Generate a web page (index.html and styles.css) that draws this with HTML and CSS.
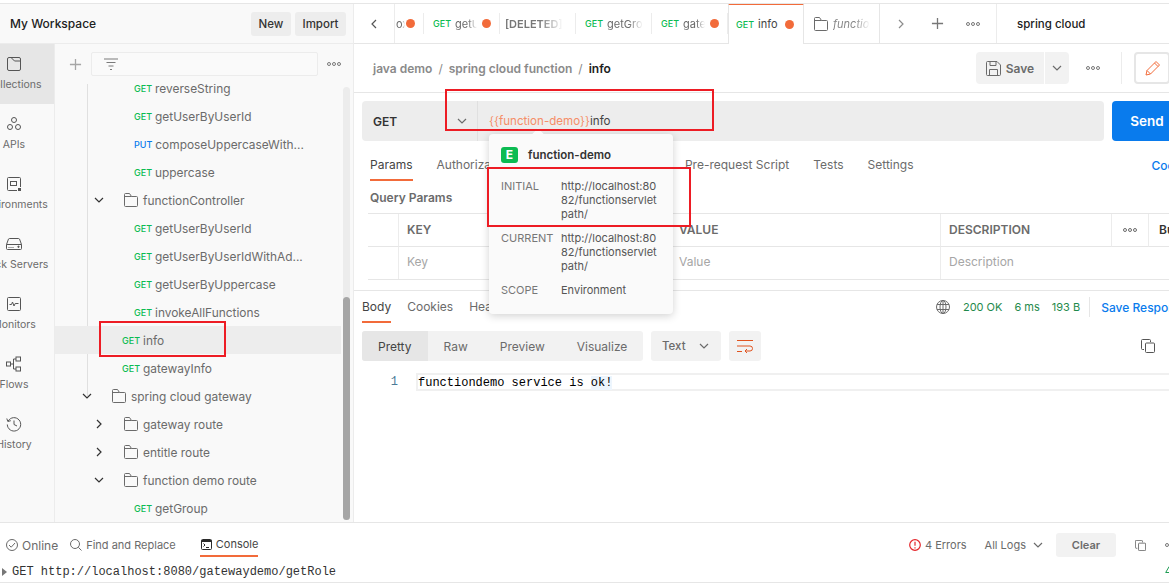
FILE: index.html
```html
<!DOCTYPE html>
<html lang="en">
<head>
<meta charset="UTF-8">
<title>My Workspace</title>
<link rel="stylesheet" href="styles.css">
</head>
<body>
<svg class="defs" width="0" height="0">
  <symbol id="folder" viewBox="0 0 14 14"><path d="M.5 12.500V1.500a1 1 0 0 1 1-1h4l2 3h5a1 1 0 0 1 1 1v8a1 1 0 0 1-1 1h-11a1 1 0 0 1-1-1zM.5 3.500h7" fill="none" stroke="currentColor"/></symbol>
  <symbol id="chev-down" viewBox="0 0 10 10"><path d="M1 3l4 4 4-4" fill="none" stroke="currentColor" stroke-width="1.2"/></symbol>
  <symbol id="chev-right" viewBox="0 0 10 10"><path d="M3 1l4 4-4 4" fill="none" stroke="currentColor" stroke-width="1.2"/></symbol>
  <symbol id="dots" viewBox="0 0 14 4"><g fill="none" stroke="currentColor"><circle cx="2" cy="2" r="1.5"/><circle cx="7" cy="2" r="1.5"/><circle cx="12" cy="2" r="1.5"/></g></symbol>
  <symbol id="plus" viewBox="0 0 14 14"><path d="M7 1v12M1 7h12" fill="none" stroke="currentColor" stroke-width="1.4"/></symbol>
  <symbol id="copy" viewBox="0 0 14 14"><path d="M3 10.5H1.5a1 1 0 0 1-1-1v-8a1 1 0 0 1 1-1h7a1 1 0 0 1 1 1V3" fill="none" stroke="currentColor"/><rect x="4.5" y="4" width="9" height="9.500" rx="1" fill="none" stroke="currentColor"/></symbol>
</svg>

<div class="app">
  <div class="main">
    <aside class="sidebar">
      <div class="ws-head">
        <span class="ws-title">My Workspace</span>
        <span class="btn-grey btn-new">New</span>
        <span class="btn-grey btn-import">Import</span>
      </div>
      <div class="side-body">
        <nav class="side-nav">
          <a class="nav-item active">
            <svg width="16" height="16" viewBox="0 0 16 16" fill="none" stroke="currentColor"><rect x="1.500" y="1.500" width="13" height="13" rx="1.500"/><path d="M5 1.500L8.500 5h6"/></svg>
            <span>Collections</span>
          </a>
          <a class="nav-item">
            <svg width="16" height="16" viewBox="0 0 16 16" fill="none" stroke="currentColor"><circle cx="8" cy="4" r="2.500"/><circle cx="4" cy="11" r="2.500"/><circle cx="12" cy="11" r="2.500"/></svg>
            <span>APIs</span>
          </a>
          <a class="nav-item">
            <svg width="16" height="16" viewBox="0 0 16 16" fill="none" stroke="currentColor"><path d="M14.500 11V2.500a1 1 0 0 0-1-1h-11a1 1 0 0 0-1 1v11a1 1 0 0 0 1 1H11"/><rect x="4.500" y="5.500" width="6" height="4"/><rect x="12" y="12" width="3" height="3" fill="currentColor" stroke="none"/></svg>
            <span>Environments</span>
          </a>
          <a class="nav-item">
            <svg width="16" height="16" viewBox="0 0 16 16" fill="none" stroke="currentColor"><path d="M.500 8.500l2-5.500a1 1 0 0 1 1-.500h9a1 1 0 0 1 1 .500l2 5.500v4a1 1 0 0 1-1 1h-13a1 1 0 0 1-1-1zM.500 8.500h15M3 11v1M5 11v1M7 11v1"/><circle cx="12.500" cy="10.800" r=".7" fill="currentColor"/></svg>
            <span>Mock Servers</span>
          </a>
          <a class="nav-item">
            <svg width="16" height="16" viewBox="0 0 16 16" fill="none" stroke="currentColor"><rect x="1.500" y="1.500" width="13" height="13" rx="1"/><path d="M3.500 8.500H5.500l1-2.500 1.500 4 1.200-2.500h3.300"/></svg>
            <span>Monitors</span>
          </a>
          <a class="nav-item">
            <svg width="16" height="16" viewBox="0 0 16 16" fill="none" stroke="currentColor"><rect x=".500" y="6" width="4" height="4"/><rect x="10" y="1" width="4.500" height="4"/><rect x="10" y="11" width="4.500" height="4"/><path d="M4.500 8h3V3H10M7.500 8v5H10"/></svg>
            <span>Flows</span>
          </a>
          <a class="nav-item">
            <svg width="16" height="16" viewBox="0 0 16 16" fill="none" stroke="currentColor"><path d="M2.200 5A6.700 6.700 0 1 1 1.300 8.500M.800 2.500l1 3 3-.800M8 4.500V8.500l3 1.500"/></svg>
            <span>History</span>
          </a>
        </nav>
        <div class="collections">
          <div class="tools">
            <svg class="tool-plus" width="13" height="13"><use href="#plus"/></svg>
            <div class="filter">
              <svg width="14" height="12" viewBox="0 0 14 12" fill="none" stroke="currentColor"><path d="M0 1h14M2.500 4.500h9M4.500 8h5M6 11.500h2"/></svg>
            </div>
            <svg class="tool-dots" width="14" height="4"><use href="#dots"/></svg>
          </div>
          <div class="tree">
            <div class="tree-group">
              <div class="row lv3"><span class="m get">GET</span><span class="nm">reverseString</span></div>
              <div class="row lv3"><span class="m get">GET</span><span class="nm">getUserByUserId</span></div>
              <div class="row lv3"><span class="m put">PUT</span><span class="nm">composeUppercaseWith...</span></div>
              <div class="row lv3"><span class="m get">GET</span><span class="nm">uppercase</span></div>
              <div class="row lv1f"><svg class="chev" width="10" height="10"><use href="#chev-down"/></svg><svg class="fld" width="14" height="14"><use href="#folder"/></svg><span class="nm">functionController</span></div>
              <div class="row lv3"><span class="m get">GET</span><span class="nm">getUserByUserId</span></div>
              <div class="row lv3"><span class="m get">GET</span><span class="nm">getUserByUserIdWithAd...</span></div>
              <div class="row lv3"><span class="m get">GET</span><span class="nm">getUserByUppercase</span></div>
              <div class="row lv3"><span class="m get">GET</span><span class="nm">invokeAllFunctions</span></div>
              <div class="row lv2 selected"><span class="m get">GET</span><span class="nm">info</span></div>
              <div class="row lv2"><span class="m get">GET</span><span class="nm">gatewayInfo</span></div>
            </div>
            <div class="row lv0f"><svg class="chev" width="10" height="10"><use href="#chev-down"/></svg><svg class="fld" width="14" height="14"><use href="#folder"/></svg><span class="nm">spring cloud gateway</span></div>
            <div class="row lv1f"><svg class="chev" width="10" height="10"><use href="#chev-right"/></svg><svg class="fld" width="14" height="14"><use href="#folder"/></svg><span class="nm">gateway route</span></div>
            <div class="row lv1f"><svg class="chev" width="10" height="10"><use href="#chev-right"/></svg><svg class="fld" width="14" height="14"><use href="#folder"/></svg><span class="nm">entitle route</span></div>
            <div class="row lv1f"><svg class="chev" width="10" height="10"><use href="#chev-down"/></svg><svg class="fld" width="14" height="14"><use href="#folder"/></svg><span class="nm">function demo route</span></div>
            <div class="row lv3"><span class="m get">GET</span><span class="nm">getGroup</span></div>
            <div class="scroll-track"><div class="scroll-thumb"></div></div>
          </div>
        </div>
      </div>
    </aside>

    <section class="pane">
      <div class="pane-inner">
        <div class="tabstrip">
          <div class="tab-arrow"><svg width="10" height="10"><use href="#chev-right" class="flip"/></svg></div>
          <div class="tab tab-first"><span class="tab-name fade">ox</span><i class="dot"></i></div>
          <div class="tab"><span class="m get">GET</span><span class="tab-name fade w21">getUser</span><i class="dot"></i></div>
          <div class="tab"><span class="tab-name deleted fade">[DELETED]</span></div>
          <div class="tab"><span class="m get">GET</span><span class="tab-name fade w35">getGroup</span></div>
          <div class="tab"><span class="m get">GET</span><span class="tab-name fade w21">gateway</span><i class="dot"></i></div>
          <div class="tab tab-active"><span class="m get">GET</span><span class="tab-name">info</span><i class="dot"></i></div>
          <div class="tab tab-folder"><svg width="14" height="14"><use href="#folder"/></svg><em class="tab-name fade">function</em></div>
          <div class="tab-tools">
            <svg class="tt-next" width="10" height="10"><use href="#chev-right"/></svg>
            <svg class="tt-plus" width="13" height="13"><use href="#plus"/></svg>
            <svg class="tt-dots" width="14" height="4"><use href="#dots"/></svg>
          </div>
          <div class="env-name">spring cloud</div>
        </div>

        <div class="crumbs">
          <span class="crumb">java demo</span><span class="crumb-sep">/</span>
          <span class="crumb">spring cloud function</span><span class="crumb-sep">/</span>
          <span class="crumb-last">info</span>
          <div class="save-group">
            <span class="save-btn">
              <svg width="15" height="15" viewBox="0 0 15 15" fill="none" stroke="currentColor"><path d="M1.500.500h9.500l3.500 3.500v9.500a1 1 0 0 1-1 1h-12a1 1 0 0 1-1-1v-12a1 1 0 0 1 1-1zM4 .500v4h6v-4M3.500 14.500V8.500h8v6"/></svg>
              Save
            </span>
            <span class="save-drop"><svg width="10" height="10"><use href="#chev-down"/></svg></span>
          </div>
          <svg class="crumb-dots" width="14" height="4"><use href="#dots"/></svg>
          <span class="crumb-div"></span>
          <span class="edit-btn"><svg width="16" height="16" viewBox="0 0 16 16" fill="none" stroke="#f26b3a"><path d="M1 15l1-4.500L11 1.500l3.500 3.500L5.500 14zM9.500 3l3.500 3.500M2 10.500L5.500 14"/></svg></span>
        </div>

        <div class="url-row">
          <div class="method-box"><span>GET</span><svg width="10" height="10"><use href="#chev-down"/></svg></div>
          <div class="url-box"><span class="var">{{function-demo}}</span><span class="url-rest">info</span></div>
          <div class="send-btn">Send</div>
        </div>

        <div class="req-tabs">
          <span class="req-tab on">Params</span>
          <span class="req-tab">Authorization</span>
          <span class="req-tab">Headers (8)</span>
          <span class="req-tab body-tab">Body</span>
          <span class="req-tab">Pre-request Script</span>
          <span class="req-tab">Tests</span>
          <span class="req-tab">Settings</span>
          <span class="cookies-link">Cookies</span>
        </div>

        <div class="qp-title">Query Params</div>
        <div class="params-table">
          <div class="cell cell-head"></div>
          <div class="cell cell-head">KEY</div>
          <div class="cell cell-head">VALUE</div>
          <div class="cell cell-head">DESCRIPTION</div>
          <div class="cell cell-head cell-more"><svg width="14" height="4"><use href="#dots"/></svg></div>
          <div class="cell cell-head cell-bulk">Bulk Edit</div>
          <div class="cell"></div>
          <div class="cell cell-ph">Key</div>
          <div class="cell cell-ph">Value</div>
          <div class="cell cell-ph cell-wide">Description</div>
        </div>

        <div class="resp-head">
          <span class="req-tab on">Body</span>
          <span class="req-tab">Cookies</span>
          <span class="req-tab">Headers (5)</span>
          <span class="req-tab">Test Results</span>
          <div class="resp-meta">
            <svg class="globe" width="14" height="14" viewBox="0 0 14 14" fill="none" stroke="currentColor"><circle cx="7" cy="7" r="6.500"/><ellipse cx="7" cy="7" rx="3" ry="6.500"/><path d="M1 4.500h12M1 9.500h12M7 .500v13"/></svg>
            <span class="ok">200 OK</span>
            <span class="ok">6 ms</span>
            <span class="ok">193 B</span>
            <span class="meta-div"></span>
            <span class="save-resp">Save Response</span>
          </div>
        </div>

        <div class="resp-tools">
          <div class="seg">
            <span class="seg-item on">Pretty</span>
            <span class="seg-item">Raw</span>
            <span class="seg-item">Preview</span>
            <span class="seg-item">Visualize</span>
          </div>
          <div class="fmt-select"><span>Text</span><svg width="10" height="10"><use href="#chev-down"/></svg></div>
          <div class="wrap-btn"><svg width="16" height="14" viewBox="0 0 16 14" fill="none" stroke="#e0531f"><path d="M0 1.500h16M0 7h13a2.500 2.500 0 0 1 0 5H8M10 10l-2 2 2 2M0 12.500h5"/></svg></div>
          <svg class="resp-copy" width="14" height="14"><use href="#copy"/></svg>
        </div>

        <div class="editor">
          <span class="ln">1</span>
          <div class="active-line"><span>functiondemo service is <span class="hl">ok!</span></span></div>
        </div>
      </div>
    </section>
  </div>

  <footer class="bottom">
    <div class="status">
      <span class="st-item st-online"><svg width="12" height="12" viewBox="0 0 12 12" fill="none" stroke="currentColor"><circle cx="6" cy="6" r="5.500"/><path d="M3 6l2.200 2.200L9 4"/></svg>Online</span>
      <span class="st-item st-find"><svg width="12" height="12" viewBox="0 0 12 12" fill="none" stroke="currentColor"><circle cx="5" cy="5" r="4.500"/><path d="M8.300 8.300L11.500 11.500"/></svg>Find and Replace</span>
      <span class="st-item st-console"><svg width="11" height="11" viewBox="0 0 11 11" fill="none" stroke="#2b2b2b"><rect x=".5" y=".5" width="10" height="10" rx="1"/><path d="M.5 2h10" stroke-width="2"/><path d="M2.500 4.500l1.500 1.500-1.500 1.500M5 8.500h3"/></svg>Console</span>
      <div class="st-right">
        <span class="st-errors"><svg width="12" height="12" viewBox="0 0 12 12" fill="none" stroke="#e5262b" stroke-width="1.200"><circle cx="6" cy="6" r="5.300"/><path d="M6 2.800v4M6 8.200v1.200"/></svg>4 Errors</span>
        <span class="st-logs">All Logs<svg width="10" height="10"><use href="#chev-down"/></svg></span>
        <span class="clear-btn">Clear</span>
        <svg class="st-copy" width="11" height="11"><use href="#copy"/></svg>
        <svg class="st-dots" width="14" height="4"><use href="#dots"/></svg>
      </div>
    </div>
    <div class="console-row">
      <i class="caret"></i>
      <span class="log">GET http://localhost:8080/gatewaydemo/getRole</span>
      <svg class="warn-mark" width="8" height="7" viewBox="0 0 8 7" fill="none" stroke="#1f9d55"><path d="M4 .8L7.300 6.500H.7z"/></svg>
    </div>
  </footer>
</div>

<!-- environment variable popover -->
<div class="var-pop">
  <div class="pop-title"><span class="env-badge">E</span>function-demo</div>
  <div class="pop-grid">
    <span class="pop-k">INITIAL</span><span class="pop-v">http://localhost:8082/functionservletpath/</span>
    <span class="pop-k">CURRENT</span><span class="pop-v">http://localhost:8082/functionservletpath/</span>
    <span class="pop-k">SCOPE</span><span class="pop-v">Environment</span>
  </div>
</div>

<!-- red annotation boxes from the screenshot -->
<div class="mark mark-url"></div>
<div class="mark mark-initial"></div>
<div class="mark mark-info"></div>
</body>
</html>
```

FILE: styles.css
```css
* {
  box-sizing: border-box;
}

html, body {
  margin: 0;
  height: 100%;
  overflow: hidden;
  background: #fff;
}

body {
  font-family: Inter, "Noto Sans", sans-serif;
  font-size: 12px;
  color: #6b6b6b;
  position: relative;
}

svg {
  display: block;
  flex: none;
}

.defs {
  position: absolute;
}

.app {
  height: 588px;
  padding-top: 3px;
  display: flex;
  flex-direction: column;
}

.main {
  flex: 1;
  min-height: 0;
  display: flex;
  border-top: 1px solid #e6e6e6;
}

/* sidebar */
.sidebar {
  width: 354px;
  flex: none;
  background: #f9f9f9;
  border-right: 1px solid #ececec;
  display: flex;
  flex-direction: column;
}

.ws-head {
  height: 40px;
  flex: none;
  display: flex;
  align-items: center;
  gap: 4px;
  padding: 0 7px 0 10px;
  border-bottom: 1px solid #ececec;
}

.ws-title {
  flex: 1;
  font-weight: 500;
  font-size: 12px;
  color: #212121;
}

.btn-grey {
  height: 24px;
  display: flex;
  align-items: center;
  justify-content: center;
  background: #ededed;
  border-radius: 3px;
  color: #333;
  font-size: 11.500px;
  font-weight: 500;
}

.btn-new {
  width: 40px;
}

.btn-import {
  width: 51px;
}

.side-body {
  flex: 1;
  min-height: 0;
  display: flex;
}

.side-nav {
  width: 81px;
  margin-left: -26px;
  flex: none;
  border-right: 1px solid #ececec;
}

.nav-item {
  height: 60px;
  display: flex;
  flex-direction: column;
  align-items: center;
  padding-top: 12px;
  gap: 6px;
  font-size: 10.500px;
  line-height: 14px;
  color: #6b6b6b;
}

.nav-item svg {
  color: #555;
}

.nav-item.active {
  background: #e6e6e6;
}

.collections {
  flex: 1;
  min-width: 0;
  display: flex;
  flex-direction: column;
}

.tools {
  height: 40px;
  flex: none;
  display: flex;
  align-items: center;
  padding: 0 12px 0 14px;
  background: #f9f9f9;
}

.tool-plus {
  color: #a6a6a6;
}

.filter {
  width: 227px;
  height: 24px;
  margin: 0 9px 0 9px;
  padding-left: 12px;
  display: flex;
  align-items: center;
  background: #fafafa;
  border: 1px solid #ececec;
  border-radius: 2px;
  color: #7a7a7a;
}

.tool-dots {
  color: #7a7a7a;
}

.tree {
  flex: 1;
  min-height: 0;
  overflow: hidden;
  position: relative;
}

.tree-group {
  margin-top: -10px;
  position: relative;
}

.tree-group::before {
  content: "";
  position: absolute;
  left: 32px;
  top: 0;
  bottom: -14px;
  width: 1px;
  background: #e0e0e0;
}

.row {
  height: 28px;
  display: flex;
  align-items: center;
  white-space: nowrap;
  margin-right: 12px;
  font-size: 11.900px;
  color: #6b6b6b;
  position: relative;
}

.row.selected {
  background: #ededed;
}

.lv3 {
  padding-left: 79px;
}

.lv2 {
  padding-left: 67px;
}

.lv1f {
  padding-left: 39px;
}

.lv0f {
  padding-left: 27px;
}

.chev {
  color: #333;
  margin-right: 20px;
}

.fld {
  color: #6b6b6b;
  margin-right: 5px;
}

.m {
  font-size: 9px;
  font-weight: 500;
  margin-right: 3px;
  flex: none;
}

.m.get {
  color: #0cbb52;
}

.m.put {
  color: #097bed;
}

.scroll-track {
  position: absolute;
  right: 3px;
  top: 3px;
  bottom: 2px;
  width: 7px;
  border-radius: 4px;
  background: #ececec;
}

.scroll-thumb {
  position: absolute;
  left: 0;
  right: 0;
  bottom: 0;
  height: 223px;
  border-radius: 4px;
  background: #a6a6a6;
}

/* right side */
.pane {
  flex: 1;
  min-width: 0;
  overflow: hidden;
}

.pane-inner {
  width: 860px;
}

.tabstrip {
  height: 40px;
  display: flex;
  align-items: stretch;
  border-bottom: 1px solid #e6e6e6;
}

.tab-arrow {
  width: 41px;
  display: flex;
  align-items: center;
  justify-content: center;
  color: #555;
  border-right: 1px solid #ececec;
}

.flip {
  transform: rotate(180deg);
  transform-origin: 5px 5px;
}

.tab {
  width: 76px;
  flex: none;
  padding: 0 9px;
  display: flex;
  align-items: center;
  position: relative;
  font-size: 11px;
  white-space: nowrap;
  overflow: hidden;
}

.tab::after {
  content: "";
  position: absolute;
  right: 0;
  top: 9px;
  bottom: 9px;
  width: 1px;
  background: #ececec;
}

.tab .m {
  color: #0cbb52;
  margin-right: 4px;
}

.tab-first {
  width: 29px;
  padding: 0 9px 0 1px;
}

.tab-name {
  overflow: hidden;
  display: block;
}

.fade {
  -webkit-mask-image: linear-gradient(to right, #000 60%, transparent);
  mask-image: linear-gradient(to right, #000 60%, transparent);
}

.tab-first .fade {
  width: 9px;
}

.w21 {
  width: 22px;
}

.w35 {
  width: 36px;
}

.deleted {
  font-weight: 600;
  color: #777;
  margin-left: -4px;
}

.dot {
  width: 9px;
  height: 9px;
  margin-left: auto;
  border-radius: 50%;
  background: #f26b3a;
  flex: none;
}

.tab-active {
  margin-top: -1px;
  margin-bottom: -1px;
  padding: 0 9px 1px 7px;
  background: #fff;
  border-top: 2px solid #f26b3a;
  border-left: 1px solid #e6e6e6;
  border-right: 1px solid #e6e6e6;
}

.tab-active::after,
.tab-folder::after {
  display: none;
}

.tab-active .tab-name {
  color: #444;
}

.tab-folder {
  border-right: 1px solid #e6e6e6;
  gap: 5px;
  padding-left: 10px;
  color: #6b6b6b;
}

.tab-folder .tab-name {
  width: 40px;
  color: #888;
}

.tab-tools {
  width: 117px;
  flex: none;
  display: flex;
  align-items: center;
  border-right: 1px solid #ececec;
  color: #777;
}

.tt-next {
  margin-left: 16px;
  color: #8c8c8c;
}

.tt-plus {
  margin-left: 25px;
  color: #777;
}

.tt-dots {
  margin-left: 22px;
}

.env-name {
  padding-left: 20px;
  display: flex;
  align-items: center;
  font-weight: 500;
  color: #212121;
  font-size: 11.500px;
}

.crumbs {
  height: 49px;
  display: flex;
  align-items: center;
  padding: 0 44px 0 19px;
  border-bottom: 1px solid #e6e6e6;
  font-size: 12px;
  font-weight: 600;
}

.crumb {
  color: #8a8a8a;
}

.crumb-sep {
  margin: 0 6px;
  color: #8a8a8a;
  font-weight: 400;
}

.crumb-last {
  color: #212121;
}

.save-group {
  margin-left: auto;
  display: flex;
  gap: 1px;
}

.save-btn {
  width: 68px;
  height: 32px;
  display: flex;
  align-items: center;
  justify-content: center;
  gap: 5px;
  background: #f2f2f2;
  border-radius: 4px 0 0 4px;
  color: #6b6b6b;
}

.save-drop {
  width: 24px;
  height: 32px;
  display: flex;
  align-items: center;
  justify-content: center;
  background: #f2f2f2;
  border-radius: 0 4px 4px 0;
  color: #6b6b6b;
}

.crumb-dots {
  margin: 0 0 0 17px;
  color: #777;
}

.crumb-div {
  width: 1px;
  height: 32px;
  margin: 0 12px 0 21px;
  background: #ececec;
}

.edit-btn {
  width: 36px;
  height: 32px;
  display: flex;
  align-items: center;
  padding-left: 9px;
  border: 2px solid #e6e6e6;
  border-radius: 4px;
}

.url-row {
  height: 40px;
  margin-top: 8px;
  padding: 0 32px 0 8px;
  display: flex;
}

.method-box {
  width: 116px;
  flex: none;
  padding: 0 10px 0 11px;
  display: flex;
  align-items: center;
  justify-content: space-between;
  background: #ededed;
  border-right: 1px solid #e0e0e0;
  border-radius: 4px 0 0 4px;
  font-weight: 600;
  color: #333;
}

.method-box svg {
  color: #6b6b6b;
}

.url-box {
  flex: 1;
  padding-left: 11px;
  display: flex;
  align-items: center;
  background: #ededed;
  border-radius: 0 4px 4px 0;
  font-size: 11.600px;
}

.var {
  color: #f58e68;
}

.url-rest {
  color: #444;
}

.send-btn {
  width: 70px;
  margin-left: 8px;
  display: flex;
  align-items: center;
  justify-content: center;
  background: #097bed;
  border-radius: 4px;
  color: #fff;
  font-size: 13.500px;
  font-weight: 600;
}

.req-tabs {
  height: 31px;
  margin-top: 9px;
  padding: 0 16px;
  display: flex;
  gap: 24px;
  font-size: 12px;
}

.req-tab {
  height: 31px;
  display: flex;
  align-items: center;
  white-space: nowrap;
  color: #6b6b6b;
  border-bottom: 2px solid transparent;
}

.req-tab.on {
  color: #444;
  border-bottom-color: #f26b3a;
}

.req-tab.body-tab {
  margin-right: 4px;
}

.cookies-link {
  margin-left: auto;
  display: flex;
  align-items: center;
  color: #097bed;
  font-weight: 500;
}

.qp-title {
  height: 32px;
  padding-left: 16px;
  display: flex;
  align-items: center;
  font-weight: 600;
  color: #6b6b6b;
}

.params-table {
  margin-left: 14px;
  display: grid;
  grid-template-columns: 30px 272px 270px 171px 37px 72px;
  grid-template-rows: 33px 32px;
  border-top: 1px solid #e6e6e6;
  border-bottom: 1px solid #e6e6e6;
}

.cell {
  display: flex;
  align-items: center;
  padding-left: 8px;
  border-left: 1px solid #ececec;
  white-space: nowrap;
}

.cell:first-child,
.cell:nth-child(7) {
  border-left: none;
}

.cell-head {
  border-bottom: 1px solid #e6e6e6;
  padding-bottom: 1px;
  font-weight: 600;
  color: #6b6b6b;
}

.cell-more {
  justify-content: center;
  padding: 0;
}

.cell-bulk {
  padding-left: 10px;
  color: #333;
}

.cell-ph {
  padding-bottom: 3px;
  color: #a6a6a6;
}

.cell-wide {
  grid-column: span 3;
}

.resp-head {
  height: 33px;
  margin-top: 10px;
  padding: 0 25px 0 8px;
  display: flex;
  gap: 16px;
  border-top: 1px solid #e6e6e6;
  font-size: 12px;
}

.resp-head .req-tab {
  height: 32px;
}

.resp-meta {
  margin-left: auto;
  display: flex;
  align-items: center;
  font-size: 11px;
}

.globe {
  color: #6b6b6b;
  margin-right: 13px;
}

.ok {
  color: #1f8a4c;
  margin-right: 12px;
}

.meta-div {
  width: 1px;
  height: 20px;
  margin: 0 11px 0 -3px;
  background: #e6e6e6;
}

.save-resp {
  color: #097bed;
  font-weight: 500;
  white-space: nowrap;
  font-size: 12px;
}

.resp-tools {
  height: 30px;
  margin-top: 8px;
  padding: 0 8px;
  display: flex;
  gap: 8px;
  align-items: stretch;
}

.seg {
  width: 281px;
  display: flex;
  background: #f2f2f2;
  border-radius: 3px;
}

.seg-item {
  padding: 0 16px;
  display: flex;
  align-items: center;
  font-size: 12px;
}

.seg-item.on {
  background: #e6e6e6;
  color: #444;
  border-radius: 3px 0 0 3px;
}

.fmt-select {
  width: 70px;
  padding: 0 12px 0 11px;
  display: flex;
  align-items: center;
  justify-content: space-between;
  background: #f2f2f2;
  border-radius: 3px;
  font-size: 11.500px;
  font-weight: 500;
}

.wrap-btn {
  width: 32px;
  display: flex;
  align-items: center;
  justify-content: center;
  background: #f2f2f2;
  border-radius: 3px;
}

.resp-copy {
  margin-left: 372px;
  align-self: center;
  color: #555;
}

.editor {
  height: 18px;
  margin-top: 12px;
  display: flex;
  font-family: "Liberation Mono", monospace;
  font-size: 12px;
}

.ln {
  width: 62px;
  flex: none;
  padding: 2px 18px 0 0;
  text-align: right;
  color: #4a7a96;
}

.active-line {
  flex: 1;
  display: flex;
  align-items: center;
  padding-top: 1px;
  border: 2px solid #f0f0f0;
  border-right: none;
  color: #000;
  white-space: pre;
}

.hl {
  background: #edf5fd;
}

/* bottom bar */
.bottom {
  flex: none;
  height: 66px;
  border-top: 1px solid #e6e6e6;
}

.status {
  height: 42px;
  margin-right: -10px;
  padding: 10px 0 0 6px;
  display: flex;
  align-items: flex-start;
  font-size: 11px;
}

.st-item {
  height: 24px;
  display: flex;
  align-items: center;
  gap: 4px;
  white-space: nowrap;
  color: #6b6b6b;
}

.st-online {
  margin-right: 12px;
  font-size: 12px;
}

.st-find {
  margin-right: 24px;
}

.st-console {
  border-bottom: 2px solid #f26b3a;
  color: #444;
  padding: 0 0 0 1px;
}

.st-right {
  margin-left: auto;
  display: flex;
  align-items: center;
  height: 24px;
}

.st-errors {
  display: flex;
  align-items: center;
  gap: 4px;
  margin-right: 18px;
}

.st-logs {
  display: flex;
  align-items: center;
  gap: 7px;
  margin-right: 13px;
}

.clear-btn {
  width: 60px;
  height: 24px;
  display: flex;
  align-items: center;
  justify-content: center;
  background: #f2f2f2;
  border-radius: 3px;
  font-weight: 600;
}

.st-copy {
  margin-left: 19px;
  color: #555;
}

.st-dots {
  margin-left: 19px;
  color: #777;
}

.console-row {
  height: 18px;
  padding-left: 2px;
  display: flex;
  align-items: flex-start;
  border-bottom: 1px solid #e6e6e6;
  font-family: "Liberation Mono", monospace;
  font-size: 12px;
  line-height: 14px;
  color: #333;
}

.caret {
  width: 0;
  height: 0;
  margin: 3px 5px 0 0;
  border-left: 5px solid #777;
  border-top: 4px solid transparent;
  border-bottom: 4px solid transparent;
}

.warn-mark {
  margin-left: auto;
  margin-right: -4px;
  margin-top: 1px;
}

/* popover */
.var-pop {
  position: absolute;
  left: 489px;
  top: 134px;
  width: 184px;
  height: 180px;
  padding: 12px;
  background: #fafafa;
  border-radius: 4px;
  box-shadow: 0 2px 8px rgba(0, 0, 0, .18);
  font-size: 11px;
  line-height: 14px;
}

.var-pop::before {
  content: "";
  position: absolute;
  left: 45px;
  top: -4px;
  width: 8px;
  height: 8px;
  background: #fafafa;
  transform: rotate(45deg);
}

.pop-title {
  height: 17px;
  display: flex;
  align-items: center;
  gap: 10px;
  font-weight: 600;
  font-size: 11.500px;
  color: #333;
}

.env-badge {
  width: 17px;
  height: 16px;
  display: flex;
  align-items: center;
  justify-content: center;
  background: #0cbb52;
  border-radius: 3px;
  color: #fff;
  font-weight: 700;
  font-size: 12px;
}

.pop-grid {
  margin-top: 16px;
  display: grid;
  grid-template-columns: 60px 98px;
  row-gap: 10px;
}

.pop-k {
  color: #777;
}

.pop-v {
  color: #555;
  word-break: break-all;
}

/* annotations */
.mark {
  position: absolute;
  border: 2px solid #ed1c24;
}

.mark-url {
  left: 445px;
  top: 89px;
  width: 269px;
  height: 42px;
}

.mark-initial {
  left: 487px;
  top: 167px;
  width: 204px;
  height: 60px;
}

.mark-info {
  left: 99px;
  top: 321px;
  width: 127px;
  height: 36px;
}
```
